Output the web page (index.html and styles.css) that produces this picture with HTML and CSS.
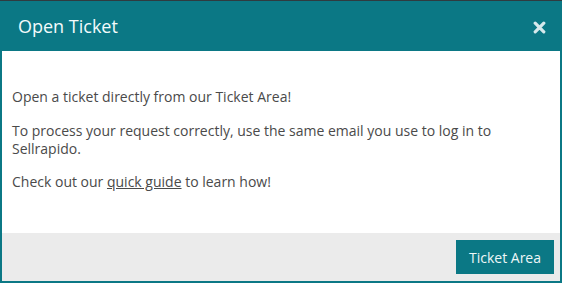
FILE: index.html
```html
<!DOCTYPE html>
<html>
<head>
<meta charset="utf-8">
<link rel="stylesheet" href="styles.css">
</head>
<body>
<div class="modal">
  <div class="modal-header">
    <h4 class="modal-title">Open Ticket</h4>
    <button class="close" aria-label="Close">
      <svg width="13" height="13" viewBox="0 0 13 13"><path d="M2.2 2.2 L10.8 10.8 M10.8 2.2 L2.2 10.8" stroke="#d6e9ec" stroke-width="3.2" stroke-linecap="round"/></svg>
    </button>
  </div>
  <div class="modal-body">
    <p>Open a ticket directly from our Ticket Area!</p>
    <p>To process your request correctly, use the same email you use to log in to Sellrapido.</p>
    <p>Check out our <a href="#">quick guide</a> to learn how!</p>
  </div>
  <div class="modal-footer">
    <button class="btn">Ticket Area</button>
  </div>
</div>
</body>
</html>
```
FILE: styles.css
```css
* { box-sizing: border-box; }
html, body { margin: 0; padding: 0; background: #0b7885; }
body { font-family: "Open Sans", "Liberation Sans", sans-serif; }
.modal {
  width: 562px;
  height: 283px;
  border-top: 1px solid #2f3b40;
  display: flex;
  flex-direction: column;
  background: #0b7885;
}
.modal-header {
  height: 50px;
  display: flex;
  align-items: center;
  justify-content: space-between;
  padding: 0 16px 0 18px;
  color: #fff;
}
.modal-title {
  margin: 0;
  font-size: 18px;
  font-weight: 400;
  line-height: 24px;
  color: #f4fbfc;
}
.close {
  background: none;
  border: 0;
  padding: 0;
  display: flex;
  margin-top: 2px;
}
.modal-body {
  flex: 1;
  background: #fff;
  margin: 0 2px;
  padding: 37px 10px 0 10px;
  font-size: 14px;
  line-height: 18px;
  color: #4a4a4a;
}
.modal-body p { margin: 0 0 15.5px 0; }
.modal-body a { color: #4a4a4a; text-decoration: underline; }
.modal-footer {
  height: 48px;
  background: #ebebeb;
  margin: 0 2px 2px 2px;
  display: flex;
  justify-content: flex-end;
  align-items: flex-start;
  padding: 7px 6px 0 0;
}
.btn {
  width: 98px;
  height: 34px;
  background: #0b7885;
  border: 0;
  color: #eef7f8;
  font-family: "Open Sans", "Liberation Sans", sans-serif;
  font-size: 14px;
  padding: 0;
}
```
